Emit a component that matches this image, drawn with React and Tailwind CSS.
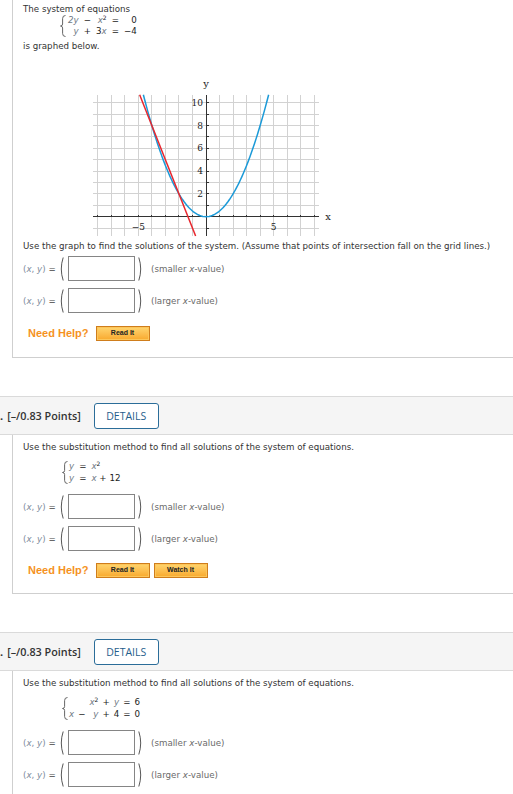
import React from 'react'

// graph scale (svg placed at page x=85, y=78)
const OX = 121
const OY = 138.7
const UX = 13.54
const UY = 11.4
const X = x => OX + UX * x
const Y = y => OY - UY * y

const XMIN = -8.35
const XMAX = 8.35
const YMIN = -1.7
const YMAX = 10.7

function parabolaPath() {
  const lim = Math.sqrt(2 * YMAX)
  const pts = []
  for (let i = 0; i <= 80; i++) {
    const x = -lim + (2 * lim * i) / 80
    pts.push(`${X(x).toFixed(2)},${Y((x * x) / 2).toFixed(2)}`)
  }
  return 'M' + pts.join(' L')
}

function Graph() {
  const vert = []
  for (let i = -8; i <= 8; i++) vert.push(i)
  const hor = []
  for (let j = -1; j <= 10; j++) hor.push(j)
  // line y = -3x - 4
  const x1 = (YMAX + 4) / -3
  const x2 = (YMIN + 4) / -3
  return (
    <svg width="255" height="160" viewBox="0 0 255 160" className="block ml-[62px]">
      {vert.map(i => (
        <line key={'v' + i} x1={X(i)} x2={X(i)} y1={Y(YMAX)} y2={Y(YMIN)} stroke="#d2d2d2" strokeWidth="1" shapeRendering="crispEdges" />
      ))}
      {hor.map(j => (
        <line key={'h' + j} x1={X(XMIN)} x2={X(XMAX)} y1={Y(j)} y2={Y(j)} stroke="#d2d2d2" strokeWidth="1" shapeRendering="crispEdges" />
      ))}
      {/* axes */}
      <line x1={X(XMIN)} x2={X(XMAX)} y1={OY} y2={OY} stroke="#333" strokeWidth="1" shapeRendering="crispEdges" />
      <line x1={OX} x2={OX} y1={Y(YMAX)} y2={Y(YMIN)} stroke="#333" strokeWidth="1" shapeRendering="crispEdges" />
      {vert.map(i => (
        <line key={'tx' + i} x1={X(i)} x2={X(i)} y1={OY - 2} y2={OY} stroke="#333" strokeWidth="1" shapeRendering="crispEdges" />
      ))}
      {hor.map(j => (
        <line key={'ty' + j} x1={OX} x2={OX + 3} y1={Y(j)} y2={Y(j)} stroke="#333" strokeWidth="1" shapeRendering="crispEdges" />
      ))}
      <g fontFamily="'DejaVu Serif', serif" fontSize="9" fill="#222">
        {[2, 4, 6, 8, 10].map(n => (
          <text key={n} x={OX - 3} y={Y(n) + 3} textAnchor="end">{n}</text>
        ))}
        <text x={X(-5)} y="152" textAnchor="middle">−5</text>
        <text x={X(5)} y="152" textAnchor="middle">5</text>
        <text x={OX} y="9" textAnchor="middle" fontSize="10">y</text>
        <text x="243" y={OY + 3} textAnchor="middle" fontSize="10">x</text>
      </g>
      <path d={parabolaPath()} fill="none" stroke="#1b9ad8" strokeWidth="1.5" />
      <line x1={X(x1)} y1={Y(YMAX)} x2={X(x2)} y2={Y(YMIN)} stroke="#e8262d" strokeWidth="1.5" />
    </svg>
  )
}

function Brace({ h = 22 }) {
  const m = h / 2
  return (
    <svg width="6" height={h} viewBox={`0 0 6 ${h}`} className="shrink-0">
      <path
        d={`M5.5 0.5 Q2.6 0.5 2.6 3.5 L2.6 ${m - 2} Q2.6 ${m} 0.5 ${m} Q2.6 ${m} 2.6 ${m + 2} L2.6 ${h - 3.5} Q2.6 ${h - 0.5} 5.5 ${h - 0.5}`}
        fill="none"
        stroke="#555"
        strokeWidth="0.9"
      />
    </svg>
  )
}

function Paren({ right }) {
  return (
    <svg width="5" height="26" viewBox="0 0 5 26" className="shrink-0">
      <path d={right ? 'M0.8 1.5 Q4.6 13 0.8 24.5' : 'M4.2 1.5 Q0.4 13 4.2 24.5'} fill="none" stroke="#444" strokeWidth="0.9" />
    </svg>
  )
}

const V = ({ children }) => <i className="text-[#707a86]">{children}</i>
const Sq = ({ children }) => (
  <span>
    <V>{children}</V>
    <sup className="text-[6px] -top-[3px]">2</sup>
  </span>
)

function AnswerRow({ label }) {
  return (
    <div className="flex items-center h-[25px]">
      <span className="w-[36px] text-[#7d8a9c] whitespace-nowrap">
        (<i>x</i>, <i>y</i>)<span className="text-[#444]"> =</span>
      </span>
      <Paren />
      <div className="ml-[4px] w-[67px] h-[25px] border border-[#858585] bg-white" />
      <span className="ml-[3px] flex"><Paren right /></span>
      <span className="ml-[8px] text-[#6a6a6a]">
        ({label} <i>x</i>-value)
      </span>
    </div>
  )
}

function HelpBtn({ children }) {
  return (
    <span className="inline-flex items-center justify-center w-[54px] h-[15px] border border-[#cf7d1c] bg-gradient-to-b from-[#ffd56e] to-[#f8a92a] font-['Liberation_Sans',sans-serif] font-bold text-[7px] text-[#222] shadow-[inset_0_0_0_1px_#fcc65a]">
      {children}
    </span>
  )
}

function NeedHelp({ watch }) {
  return (
    <div className="flex items-center h-[16px] ml-[5px]">
      <span className="font-['Liberation_Sans',sans-serif] font-bold text-[11px] text-[#f5921e]">Need Help?</span>
      <span className="ml-[7px] flex gap-[4px]">
        <HelpBtn>Read It</HelpBtn>
        {watch && <HelpBtn>Watch It</HelpBtn>}
      </span>
    </div>
  )
}

function Header() {
  return (
    <div className="flex items-center h-[39px] bg-[#f5f5f5] border-y border-[#dadada] font-['Open_Sans',sans-serif] text-[#333]">
      <span className="text-[11px] font-bold">.</span>
      <span className="ml-[4px] text-[10.8px] font-semibold">[–/0.83 Points]</span>
      <span className="ml-[13px] w-[65px] h-[26px] flex items-center justify-center bg-white border border-[#2b6d99] rounded-[3px] text-[10.5px] text-[#1f5e8b]">
        DETAILS
      </span>
    </div>
  )
}

export default function App() {
  return (
    <div className="w-[513px] min-h-[794px] bg-white overflow-hidden font-['DejaVu_Sans',sans-serif] text-[8.7px] leading-[12px] text-[#333]">
      {/* question 1 */}
      <section className="ml-[12px] border-l border-b border-[#cfcfcf] pl-[10px] pt-[3px] pb-[16px]">
        <p>The system of equations</p>
        <div className="flex items-center ml-[37px] leading-[11px]">
          <Brace h={22} />
          <div className="ml-[2px] grid grid-cols-[auto_auto_auto_auto_auto] gap-x-[5px] text-[#222]">
            <span className="text-right"><V>2y</V></span>
            <span className="text-center">−</span>
            <span className="text-right"><Sq>x</Sq></span>
            <span>=</span>
            <span className="text-right">0</span>
            <span className="text-right"><V>y</V></span>
            <span className="text-center">+</span>
            <span className="text-right">3<V>x</V></span>
            <span>=</span>
            <span className="text-right">−4</span>
          </div>
        </div>
        <p className="mt-[3px]">is graphed below.</p>
        <div className="mt-[26px]">
          <Graph />
        </div>
        <p className="mt-[2px] whitespace-nowrap">
          Use the graph to find the solutions of the system. (Assume that points of intersection fall on the grid lines.)
        </p>
        <div className="mt-[4px]"><AnswerRow label="smaller" /></div>
        <div className="mt-[7px]"><AnswerRow label="larger" /></div>
        <div className="mt-[12px]"><NeedHelp /></div>
      </section>

      {/* question 2 */}
      <div className="mt-[38px]"><Header /></div>
      <section className="ml-[12px] border-l border-b border-[#cfcfcf] pl-[10px] pt-[6px] pb-[15px]">
        <p>Use the substitution method to find all solutions of the system of equations.</p>
        <div className="flex items-center ml-[39px] mt-[7px]">
          <Brace h={23} />
          <div className="ml-[1px] grid grid-cols-[auto_auto_auto] gap-x-[5px] text-[#222]">
            <V>y</V>
            <span>=</span>
            <span><Sq>x</Sq></span>
            <V>y</V>
            <span>=</span>
            <span><V>x</V> + 12</span>
          </div>
        </div>
        <div className="mt-[10px]"><AnswerRow label="smaller" /></div>
        <div className="mt-[7px]"><AnswerRow label="larger" /></div>
        <div className="mt-[11px]"><NeedHelp watch /></div>
      </section>

      {/* question 3 */}
      <div className="mt-[38px]"><Header /></div>
      <section className="ml-[12px] border-l border-[#cfcfcf] pl-[10px] pt-[6px] pb-[30px]">
        <p>Use the substitution method to find all solutions of the system of equations.</p>
        <div className="flex items-center ml-[39px] mt-[7px]">
          <Brace h={23} />
          <div className="ml-[1px] grid grid-cols-[auto_auto_auto_auto_auto_auto_auto] gap-x-[4px] text-[#222]">
            <span />
            <span />
            <span className="text-right"><Sq>x</Sq></span>
            <span>+</span>
            <span className="text-center"><V>y</V></span>
            <span>=</span>
            <span>6</span>
            <V>x</V>
            <span>−</span>
            <span className="text-right"><V>y</V></span>
            <span>+</span>
            <span className="text-center">4</span>
            <span>=</span>
            <span>0</span>
          </div>
        </div>
        <div className="mt-[10px]"><AnswerRow label="smaller" /></div>
        <div className="mt-[7px]"><AnswerRow label="larger" /></div>
      </section>
    </div>
  )
}
